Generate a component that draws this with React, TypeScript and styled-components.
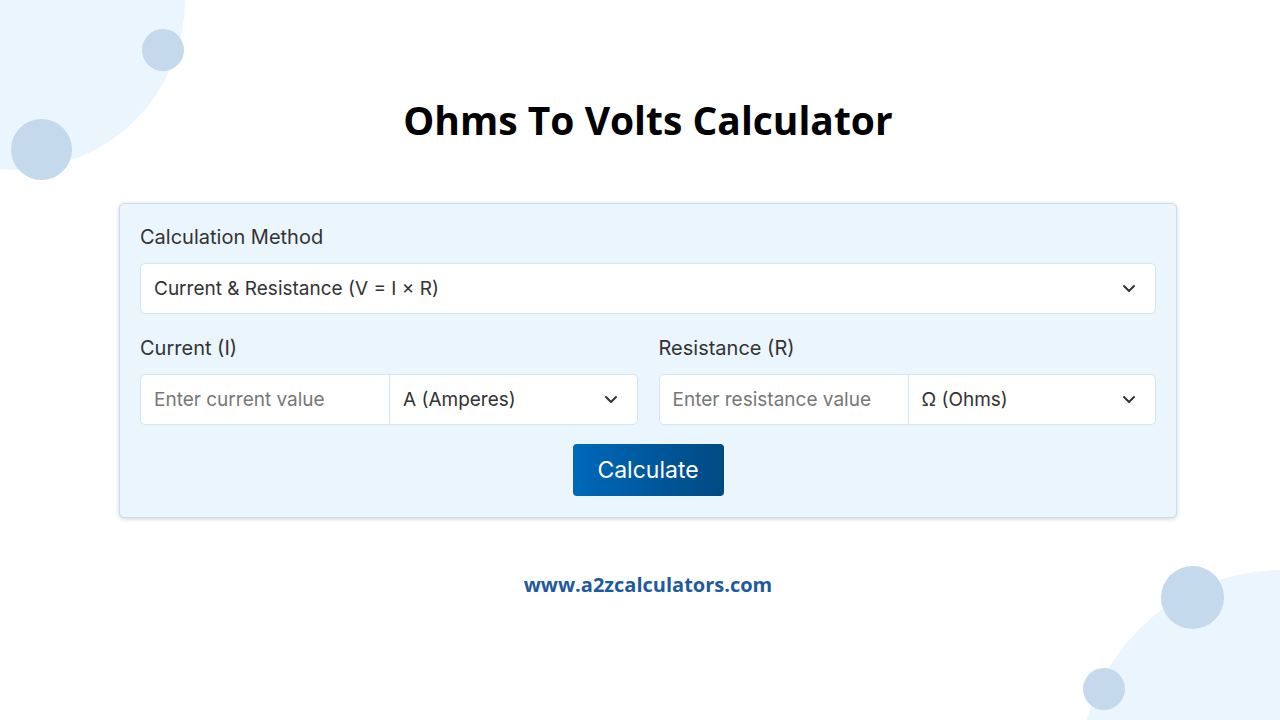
import styled, { createGlobalStyle } from 'styled-components';

const GlobalStyle = createGlobalStyle`
    html, body {
        margin: 0;
        padding: 0;
        background: #ffffff;
    }
`;

const Page = styled.div`
    position: relative;
    width: 1280px;
    height: 720px;
    overflow: hidden;
    background: #ffffff;
    font-family: Inter, 'Noto Sans', sans-serif;
`;

const Blob = styled.div<{ size: number; x: number; y: number; tone: 'pale' | 'dot' }>`
    position: absolute;
    left: ${({ x, size }) => x - size / 2}px;
    top: ${({ y, size }) => y - size / 2}px;
    width: ${({ size }) => size}px;
    height: ${({ size }) => size}px;
    border-radius: 50%;
    background: ${({ tone }) => (tone === 'pale' ? '#ebf5fe' : '#c4d9ec')};
`;

const Content = styled.main`
    position: relative;
    display: flex;
    flex-direction: column;
    align-items: center;
    padding: 96px 0 0 16px;
`;

const Title = styled.h1`
    margin: 0 0 59px;
    font-family: 'Open Sans', sans-serif;
    font-size: 39px;
    line-height: 48px;
    font-weight: 700;
    color: #000000;
`;

const Card = styled.section`
    box-sizing: border-box;
    width: 1058px;
    padding: 21px 20px 21px;
    background: #ebf5fe;
    border: 1px solid #c8def2;
    border-radius: 5px;
    box-shadow: 0 1px 4px rgba(0, 0, 0, 0.18);
    display: flex;
    flex-direction: column;
`;

const Label = styled.label`
    display: block;
    font-size: 20px;
    line-height: 25px;
    color: #333333;
    margin-bottom: 13px;
`;

const Select = styled.div`
    box-sizing: border-box;
    height: 51px;
    display: flex;
    align-items: center;
    justify-content: space-between;
    padding: 0 19px 0 13px;
    background: #ffffff;
    border: 1px solid #d2e6f8;
    border-radius: 5px;
    font-size: 19px;
    color: #333333;
`;

const Row = styled.div`
    display: grid;
    grid-template-columns: 1fr 1fr;
    gap: 21px;
    margin-top: 22px;
`;

const Field = styled.div`
    display: flex;
    flex-direction: column;
`;

const InputGroup = styled.div`
    box-sizing: border-box;
    height: 51px;
    display: grid;
    grid-template-columns: 249px 1fr;
    background: #ffffff;
    border: 1px solid #d2e6f8;
    border-radius: 5px;
`;

const Input = styled.div`
    display: flex;
    align-items: center;
    padding-left: 13px;
    font-size: 19px;
    color: #777777;
    border-right: 1px solid #d2e6f8;
`;

const Unit = styled.div`
    display: flex;
    align-items: center;
    justify-content: space-between;
    padding: 0 19px 0 13px;
    font-size: 19px;
    color: #333333;
`;

const Button = styled.button`
    align-self: center;
    margin-top: 19px;
    width: 151px;
    height: 52px;
    border: none;
    border-radius: 4px;
    background: linear-gradient(90deg, #0068ba 0%, #004a82 100%);
    color: #ffffff;
    font-family: Inter, 'Noto Sans', sans-serif;
    font-size: 23px;
`;

const Footer = styled.a`
    margin-top: 54px;
    font-family: 'Open Sans', sans-serif;
    font-weight: 700;
    font-size: 20px;
    line-height: 26px;
    color: #1d5a9e;
    text-decoration: none;
`;

function Chevron() {
    return (
        <svg width="14" height="9" viewBox="0 0 14 9" fill="none">
            <path d="M2 2l5 5 5-5" stroke="#333" strokeWidth="2" strokeLinecap="round" strokeLinejoin="round" />
        </svg>
    );
}

export default function App() {
    return (
        <Page>
            <GlobalStyle />
            <Blob tone="pale" size={340} x={15} y={0} />
            <Blob tone="dot" size={42} x={163} y={50} />
            <Blob tone="dot" size={61} x={41} y={149} />
            <Blob tone="pale" size={404} x={1282} y={772} />
            <Blob tone="dot" size={63} x={1192} y={597} />
            <Blob tone="dot" size={42} x={1104} y={689} />
            <Content>
                <Title>Ohms To Volts Calculator</Title>
                <Card>
                    <Label>Calculation Method</Label>
                    <Select>
                        Current &amp; Resistance (V = I × R)
                        <Chevron />
                    </Select>
                    <Row>
                        <Field>
                            <Label>Current (I)</Label>
                            <InputGroup>
                                <Input>Enter current value</Input>
                                <Unit>
                                    A (Amperes)
                                    <Chevron />
                                </Unit>
                            </InputGroup>
                        </Field>
                        <Field>
                            <Label>Resistance (R)</Label>
                            <InputGroup>
                                <Input>Enter resistance value</Input>
                                <Unit>
                                    Ω (Ohms)
                                    <Chevron />
                                </Unit>
                            </InputGroup>
                        </Field>
                    </Row>
                    <Button>Calculate</Button>
                </Card>
                <Footer>www.a2zcalculators.com</Footer>
            </Content>
        </Page>
    );
}
